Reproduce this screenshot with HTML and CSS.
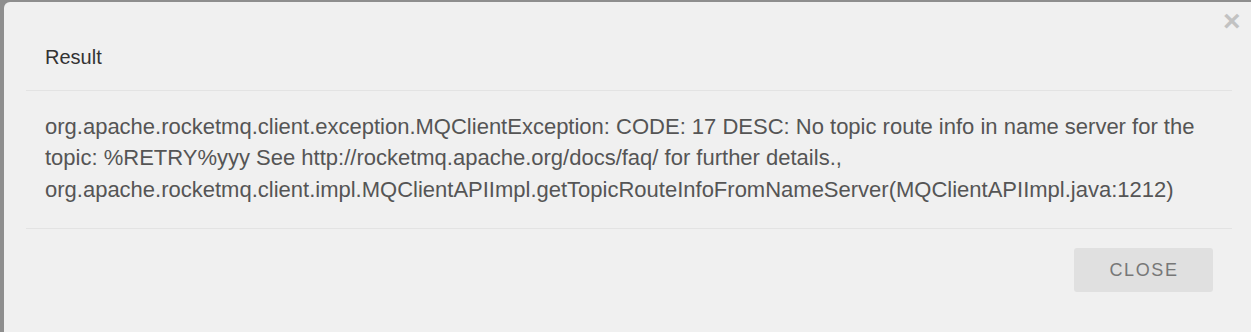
FILE: index.html
```html
<!DOCTYPE html>
<html>
<head>
<meta charset="utf-8">
<link rel="stylesheet" href="styles.css">
</head>
<body>
<div class="modal">
  <button class="close-x" aria-label="Close">×</button>
  <div class="header"><h4 class="title">Result</h4></div>
  <div class="body">org.apache.rocketmq.client.exception.MQClientException: CODE: 17 DESC: No topic route info in name server for the topic: %RETRY%yyy See http://rocketmq.apache.org/docs/faq/ for further details., org.apache.rocketmq.client.impl.MQClientAPIImpl.getTopicRouteInfoFromNameServer(MQClientAPIImpl.java:1212)</div>
  <div class="footer"><button class="btn-close">CLOSE</button></div>
</div>
</body>
</html>
```
FILE: styles.css
```css
html, body {
  margin: 0;
  padding: 0;
  height: 100%;
  overflow: hidden;
}
body {
  background: #8e8e8e;
  font-family: "Liberation Sans", Arial, sans-serif;
}
.modal {
  position: relative;
  margin: 2px 0 0 4px;
  width: 1250px;
  height: 340px;
  background: #f0f0f0;
  border-radius: 6px 0 0 6px;
  padding: 0 22px;
  box-sizing: border-box;
}
.close-x {
  position: absolute;
  top: 1px;
  left: 1219px;
  border: 0;
  background: none;
  padding: 0;
  font-family: "Liberation Sans", Arial, sans-serif;
  font-size: 30px;
  font-weight: bold;
  color: #c2c2c2;
  line-height: 36px;
}
.header {
  padding: 41px 19px 19px;
  border-bottom: 1px solid #e3e3e3;
}
.title {
  margin: 0;
  font-size: 20px;
  font-weight: normal;
  line-height: 28px;
  color: #333;
}
.body {
  padding: 20px 19px 23px;
  font-size: 22px;
  line-height: 31.4px;
  color: #555;
  border-bottom: 1px solid #e3e3e3;
}
.footer {
  display: flex;
  justify-content: flex-end;
  padding: 19px 0 0;
  margin-right: 19px;
}
.btn-close {
  width: 139px;
  height: 44px;
  border: 0;
  border-radius: 3px;
  background: #e0e0e0;
  color: #777;
  font-family: "Liberation Sans", Arial, sans-serif;
  font-size: 18px;
  letter-spacing: 1.6px;
  padding: 0 0 0 1px;
}
```
